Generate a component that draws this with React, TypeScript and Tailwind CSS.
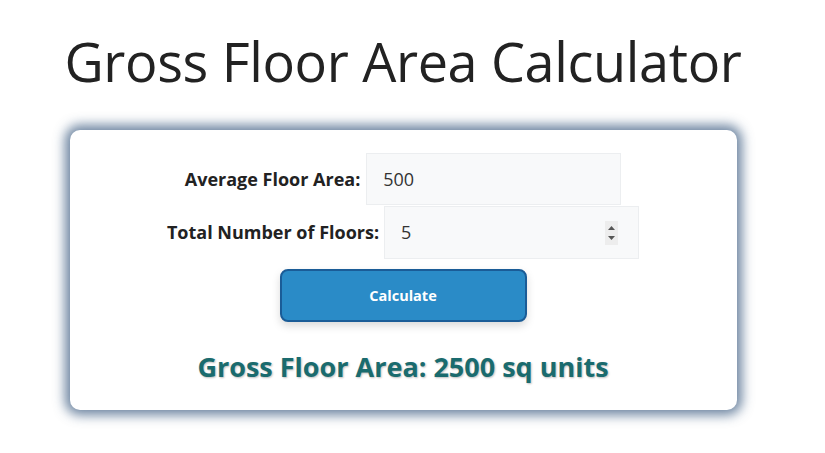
import React from "react";

export default function App() {
  return (
    <div
      className="w-[806px] min-h-[453px] bg-white flex flex-col items-center"
      style={{ fontFamily: '"Open Sans", "Noto Sans", sans-serif' }}
    >
      <h1 className="mt-[24px] text-[54px] leading-[74px] text-[#222] font-normal tracking-[-0.35px]">
        Gross Floor Area Calculator
      </h1>
      <div className="mt-[32px] w-[667px] h-[280px] bg-white rounded-[10px] shadow-[0_0_12px_5px_rgba(45,80,120,0.7)] flex flex-col items-center pt-[23px]">
        <div className="flex items-center">
          <label className="text-[18px] font-bold text-[#222] mr-[6px]">Average Floor Area:</label>
          <div className="w-[255px] h-[52px] bg-[#f8f9fa] border border-[#eceef0] flex items-center pl-[16px] text-[18px] text-[#333]">
            500
          </div>
        </div>
        <div className="flex items-center mt-[1px]">
          <label className="text-[18px] font-bold text-[#222] mr-[5px]">Total Number of Floors:</label>
          <div className="w-[255px] h-[53px] bg-[#f8f9fa] border border-[#eceef0] flex items-center pl-[16px] pr-[20px] text-[18px] text-[#333]">
            <span className="flex-1">5</span>
            <div className="w-[13px] h-[24px] bg-[#ededed] flex flex-col items-center justify-center gap-[6px]">
              <svg width="7" height="4" viewBox="0 0 7 4"><path d="M3.5 0L7 4H0z" fill="#555" /></svg>
              <svg width="7" height="4" viewBox="0 0 7 4"><path d="M0 0h7L3.5 4z" fill="#555" /></svg>
            </div>
          </div>
        </div>
        <button className="mt-[10px] w-[247px] h-[53px] bg-[#2a8bc7] border-2 border-[#1a5c97] rounded-[8px] text-white text-[14.5px] font-bold shadow-[0_4px_8px_rgba(0,0,0,0.15)]">
          Calculate
        </button>
        <div className="mt-[25px] text-[27px] font-bold text-[#1a6b6e] [text-shadow:1px_1px_2px_rgba(0,0,0,0.25)]">
          Gross Floor Area: 2500 sq units
        </div>
      </div>
    </div>
  );
}
